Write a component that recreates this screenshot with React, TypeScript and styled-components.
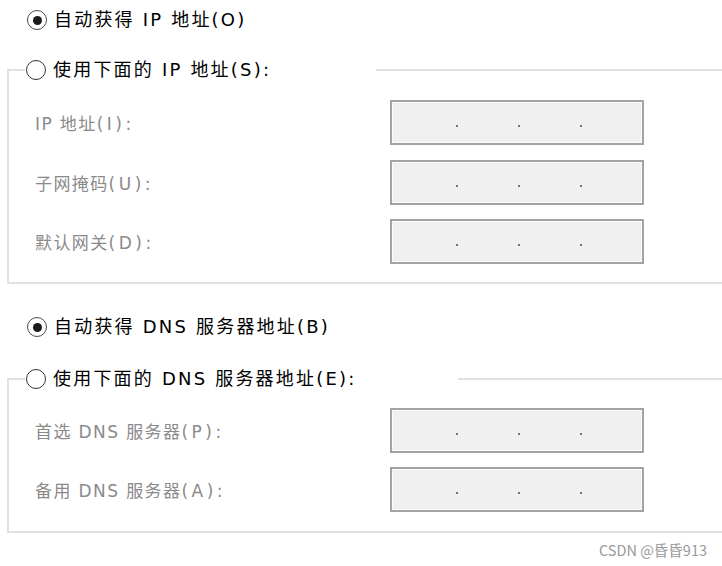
import React from "react";
import styled, { createGlobalStyle } from "styled-components";

const Global = createGlobalStyle`
  html, body { margin: 0; padding: 0; background: #ffffff; }
  body { font-family: "DejaVu Sans", "Noto Sans CJK SC", sans-serif; }
`;

const Page = styled.div`
  width: 722px;
  height: 566px;
  overflow: hidden;
  background: #fff;
  display: flex;
  flex-direction: column;
`;

const Section = styled.section<{ $top: number }>`
  display: flex;
  flex-direction: column;
  margin-top: ${(p) => p.$top}px;
`;

const RadioRow = styled.div`
  height: 40px;
  display: flex;
  align-items: center;
  padding-left: 27px;
`;

const RadioCircle = styled.span<{ $checked?: boolean }>`
  position: relative;
  flex: none;
  width: 20px;
  height: 20px;
  box-sizing: border-box;
  border-radius: 50%;
  border: 1.7px solid ${(p) => (p.$checked ? "#4a4a4a" : "#333")};
  background: #fff;
  &::after {
    content: "";
    display: ${(p) => (p.$checked ? "block" : "none")};
    position: absolute;
    left: 50%;
    top: 50%;
    width: 9px;
    height: 9px;
    margin: -4.5px 0 0 -4.5px;
    border-radius: 50%;
    background: #1c1c1c;
  }
`;

const RadioText = styled.span`
  margin-left: 7px;
  font-size: 18px;
  letter-spacing: 2.2px;
  color: #000;
  white-space: nowrap;
  line-height: 20px;
`;

const Group = styled.div<{ $top: number }>`
  display: flex;
  flex-direction: column;
  margin-top: ${(p) => p.$top}px;
`;

const GroupHeader = styled.div`
  height: 20px;
  display: flex;
  align-items: center;
`;

const Corner = styled.span`
  flex: none;
  align-self: flex-end;
  margin-left: 7px;
  width: 18px;
  height: 11px;
  box-sizing: border-box;
  border-top: 2px solid #e1e1e1;
  border-left: 2px solid #e1e1e1;
`;

const HeaderRadio = styled.span`
  display: flex;
  align-items: center;
  margin-left: 1px;
`;

const HeaderLine = styled.span<{ $from: number }>`
  margin-left: auto;
  flex: none;
  width: ${(p) => 722 - p.$from}px;
  height: 2px;
  background: #e1e1e1;
`;

const GroupBody = styled.div<{ $padTop: number; $padBottom: number; $gap: number }>`
  margin-left: 7px;
  border-left: 2px solid #e1e1e1;
  border-bottom: 2px solid #e1e1e1;
  padding: ${(p) => p.$padTop}px 0 ${(p) => p.$padBottom}px 26px;
  display: grid;
  grid-template-columns: 355px 254px;
  row-gap: ${(p) => p.$gap}px;
  align-items: center;
`;

const FieldLabel = styled.span`
  font-size: 17px;
  letter-spacing: 1.4px;
  color: #8a8a8a;
  white-space: nowrap;
`;

const Mnemonic = styled.span`
  letter-spacing: 3.5px;
`;

const IpBox = styled.div`
  width: 254px;
  height: 45px;
  box-sizing: border-box;
  border: 2px solid #a3a3a3;
  box-shadow: inset 0 0 0 1px #fbfbfb;
  background: #f0f0f0;
  display: flex;
  align-items: center;
  padding-left: 4px;
`;

const Octet = styled.span`
  width: 60px;
  height: 100%;
`;

const Dot = styled.span`
  width: 2px;
  height: 2px;
  margin-top: 7px;
  background: #6f7282;
`;

const Watermark = styled.div`
  margin-top: 8px;
  align-self: flex-end;
  padding-right: 15px;
  font-family: "Noto Sans CJK SC", sans-serif;
  font-size: 14.5px;
  line-height: 17px;
  color: #9a9a9a;
`;

function Radio({ checked, children }: { checked?: boolean; children: React.ReactNode }) {
  return (
    <>
      <RadioCircle $checked={checked} />
      <RadioText>{children}</RadioText>
    </>
  );
}

function IpField() {
  return (
    <IpBox>
      <Octet />
      <Dot />
      <Octet />
      <Dot />
      <Octet />
      <Dot />
    </IpBox>
  );
}

function Field({ label, mn }: { label: string; mn: string }) {
  return (
    <>
      <FieldLabel>
        {label}
        <Mnemonic>{mn}</Mnemonic>
      </FieldLabel>
      <IpField />
    </>
  );
}

export default function App() {
  return (
    <Page>
      <Global />
      <Section $top={0}>
        <RadioRow>
          <Radio checked>自动获得 IP 地址(O)</Radio>
        </RadioRow>
        <Group $top={20}>
          <GroupHeader>
            <Corner />
            <HeaderRadio>
              <Radio>使用下面的 IP 地址(S):</Radio>
            </HeaderRadio>
            <HeaderLine $from={376} />
          </GroupHeader>
          <GroupBody $padTop={20} $padBottom={18} $gap={14.5}>
            <Field label="IP 地址" mn="(I):" />
            <Field label="子网掩码" mn="(U):" />
            <Field label="默认网关" mn="(D):" />
          </GroupBody>
        </Group>
      </Section>
      <Section $top={23}>
        <RadioRow>
          <Radio checked>自动获得 DNS 服务器地址(B)</Radio>
        </RadioRow>
        <Group $top={22}>
          <GroupHeader>
            <Corner />
            <HeaderRadio>
              <Radio>使用下面的 DNS 服务器地址(E):</Radio>
            </HeaderRadio>
            <HeaderLine $from={458} />
          </GroupHeader>
          <GroupBody $padTop={19} $padBottom={19} $gap={14}>
            <Field label="首选 DNS 服务器" mn="(P):" />
            <Field label="备用 DNS 服务器" mn="(A):" />
          </GroupBody>
        </Group>
      </Section>
      <Watermark>CSDN @昏昏913</Watermark>
    </Page>
  );
}
